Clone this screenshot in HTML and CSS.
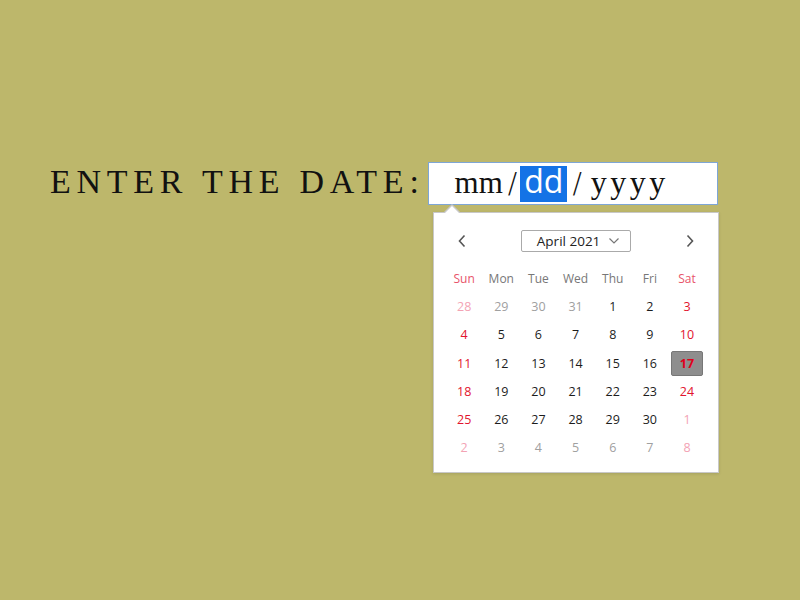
FILE: index.html
```html
<!DOCTYPE html>
<html>
<head>
<meta charset="utf-8">
<link rel="stylesheet" href="styles.css">
</head>
<body>
<div class="page">
  <div class="row">
    <label class="label">ENTER THE DATE:</label>
    <div class="field">
      <div class="input">
        <span class="mm">mm</span><span class="sep">/</span><span class="dd">dd</span><span class="sep sep2">/</span><span class="yyyy">yyyy</span>
      </div>
      <div class="popup">
        <div class="head">
          <button class="nav">
            <svg width="10" height="14" viewBox="0 0 10 14"><path d="M7.5 1.5 L2.5 7 L7.5 12.5" fill="none" stroke="#555" stroke-width="1.6"/></svg>
          </button>
          <div class="select">April 2021
            <svg width="12" height="8" viewBox="0 0 12 8"><path d="M1.5 1.5 L6 6 L10.5 1.5" fill="none" stroke="#777" stroke-width="1.2"/></svg>
          </div>
          <button class="nav">
            <svg width="10" height="14" viewBox="0 0 10 14"><path d="M2.5 1.5 L7.5 7 L2.5 12.5" fill="none" stroke="#555" stroke-width="1.6"/></svg>
          </button>
        </div>
        <div class="grid">
          <span class="wk we">Sun</span><span class="wk">Mon</span><span class="wk">Tue</span><span class="wk">Wed</span><span class="wk">Thu</span><span class="wk">Fri</span><span class="wk we">Sat</span>
          <span class="d out we">28</span><span class="d out">29</span><span class="d out">30</span><span class="d out">31</span><span class="d">1</span><span class="d">2</span><span class="d we">3</span>
          <span class="d we">4</span><span class="d">5</span><span class="d">6</span><span class="d">7</span><span class="d">8</span><span class="d">9</span><span class="d we">10</span>
          <span class="d we">11</span><span class="d">12</span><span class="d">13</span><span class="d">14</span><span class="d">15</span><span class="d">16</span><span class="d we"><span class="sel">17</span></span>
          <span class="d we">18</span><span class="d">19</span><span class="d">20</span><span class="d">21</span><span class="d">22</span><span class="d">23</span><span class="d we">24</span>
          <span class="d we">25</span><span class="d">26</span><span class="d">27</span><span class="d">28</span><span class="d">29</span><span class="d">30</span><span class="d out we">1</span>
          <span class="d out we">2</span><span class="d out">3</span><span class="d out">4</span><span class="d out">5</span><span class="d out">6</span><span class="d out">7</span><span class="d out we">8</span>
        </div>
      </div>
    </div>
  </div>
</div>
</body>
</html>
```
FILE: styles.css
```css
html, body {
  margin: 0;
  padding: 0;
}
body {
  background: #bdb76b;
  width: 800px;
  height: 600px;
  overflow: hidden;
}
.page {
  padding: 162px 0 0 50px;
}
.row {
  display: flex;
  align-items: baseline;
}
.label {
  font-family: "Liberation Serif", serif;
  font-size: 34px;
  letter-spacing: 5.75px;
  color: #111;
  margin-right: 3px;
}
.field {
  position: relative;
}
.input {
  box-sizing: border-box;
  width: 290px;
  height: 43px;
  border: 1px solid #7ea6d6;
  background: #fff;
  display: flex;
  align-items: baseline;
  padding: 3px 0 0 26px;
}
.input span {
  line-height: 30px;
  color: #111;
}
.mm {
  font-family: "Liberation Serif", serif;
  font-size: 31px;
}
.sep {
  font-family: "DejaVu Sans", sans-serif;
  font-size: 28px;
  font-weight: 300;
  padding: 0 3px 0 5px;
}
.sep2 {
  padding: 0 9px 0 5px;
}
.input .dd {
  display: inline-block;
  font-family: "Open Sans", sans-serif;
  font-size: 32px;
  line-height: 28px;
  background: #1473e6;
  color: #fff;
  padding: 1px 4px 7px;
}
.yyyy {
  font-family: "Liberation Serif", serif;
  font-size: 32px;
  letter-spacing: 3.5px;
}
.popup {
  position: absolute;
  left: 5px;
  top: 50px;
  box-sizing: border-box;
  width: 286px;
  height: 261px;
  background: #fff;
  border: 1px solid #c8c8c8;
  box-shadow: 0 1px 3px rgba(0,0,0,0.12);
  padding: 17px 12px 10px 12px;
  font-family: "Open Sans", sans-serif;
}
.popup::before {
  content: "";
  position: absolute;
  left: 10px;
  top: -9px;
  border-left: 8px solid transparent;
  border-right: 8px solid transparent;
  border-bottom: 8px solid #c8c8c8;
}
.popup::after {
  content: "";
  position: absolute;
  left: 11px;
  top: -7px;
  border-left: 7px solid transparent;
  border-right: 7px solid transparent;
  border-bottom: 7px solid #fff;
}
.head {
  display: flex;
  justify-content: space-between;
  align-items: center;
  height: 22px;
}
.nav {
  width: 32px;
  height: 22px;
  padding: 0;
  border: 0;
  background: none;
  display: flex;
  align-items: center;
  justify-content: center;
}
.select {
  box-sizing: border-box;
  width: 110px;
  height: 22px;
  border: 1px solid #aaa;
  border-radius: 2px;
  display: flex;
  align-items: center;
  justify-content: center;
  gap: 8px;
  font-size: 13.5px;
  color: #222;
  padding-left: 6px;
}
.grid {
  margin-top: 12px;
  display: grid;
  grid-template-columns: repeat(7, 1fr);
  grid-auto-rows: 28.3px;
}
.grid span {
  display: flex;
  align-items: center;
  justify-content: center;
}
.wk {
  font-size: 12px;
  color: #777;
}
.wk.we {
  color: #e8546a;
}
.d {
  font-size: 12.5px;
  color: #1c1c1c;
}
.d.we {
  color: #e2142e;
}
.d.out {
  color: #a0a0a0;
}
.d.out.we {
  color: #f3a3b4;
}
.grid .sel {
  box-sizing: border-box;
  width: 32px;
  height: 25px;
  background: #8e8e8e;
  border: 1px solid #777;
  border-radius: 2px;
  color: #e0001b;
  font-weight: 700;
}
```
